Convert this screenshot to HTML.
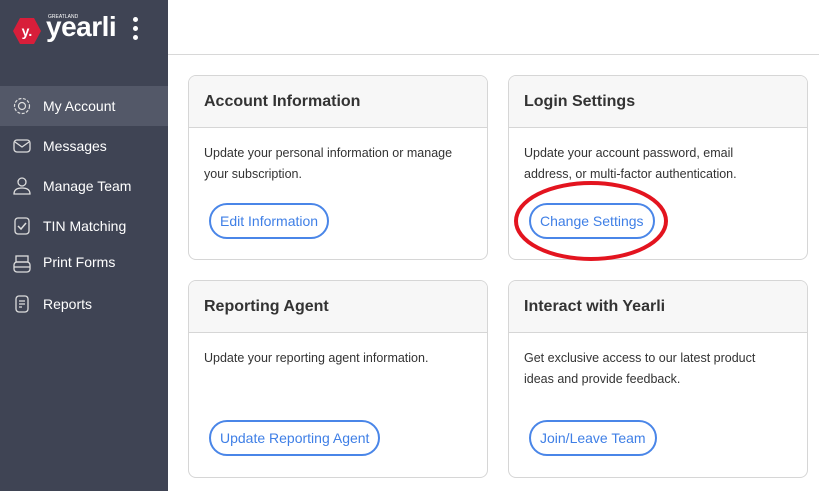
<!DOCTYPE html>
<html><head><style>
body{margin:0;width:819px;height:491px;overflow:hidden;font-family:"Liberation Sans",sans-serif;background:#fff;position:relative}
.side{position:absolute;left:0;top:0;width:168px;height:491px;background:#3f4454}
.top{position:absolute;left:168px;top:54px;width:651px;height:1px;background:#d8d8d8}
.item{position:absolute;left:0;width:168px;height:40px;color:#fff;font-size:14px;line-height:40px}
.item span{position:absolute;left:43px}
.item svg{position:absolute;left:12px;top:10px}
.card{position:absolute;width:298px;border:1px solid #d6d6d6;border-radius:8px;overflow:hidden;background:#fff}
.card h3{margin:0;height:51px;line-height:51px;background:#f7f7f7;border-bottom:1px solid #d6d6d6;font-size:16px;color:#333;padding-left:15px}
.card p{margin:0;position:absolute;left:15px;top:67px;font-size:12.5px;line-height:21px;color:#333;width:262px}
.btn{position:absolute;left:20px;height:36px;border:2px solid #4a86e8;border-radius:18px;color:#3f7fe6;font-size:14px;padding:0 9px;box-sizing:border-box;line-height:32px}
</style></head><body>
<div class="side">
<svg style="position:absolute;left:12px;top:16px" width="30" height="30" viewBox="0 0 30 30"><polygon points="8,2 22,2 29,15 22,28 8,28 1,15" fill="#d81e3a"/><text x="15" y="20" text-anchor="middle" fill="#fff" font-size="14" font-weight="bold" font-family="Liberation Sans">y.</text></svg>
<div style="position:absolute;left:48px;top:14px;color:#fff;font-size:5px">GREATLAND</div>
<div style="position:absolute;left:46px;top:13px;color:#fff;font-size:28px;font-weight:bold;letter-spacing:-0.5px;line-height:28px">yearli</div>
<div style="position:absolute;left:133px;top:17px;width:5px;height:5px;border-radius:3px;background:#fff;box-shadow:0 9px 0 #fff,0 18px 0 #fff"></div>
<div class="item" style="top:86px;background:#535868"><svg width="20" height="20" viewBox="0 0 20 20"><circle cx="10" cy="10" r="3.5" fill="none" stroke="#ddd" stroke-width="1.2"/><circle cx="10" cy="10" r="7.5" fill="none" stroke="#ddd" stroke-width="1.2" stroke-dasharray="3 1.5"/></svg><span>My Account</span></div>
<div class="item" style="top:126px"><svg width="20" height="20" viewBox="0 0 20 20"><rect x="2" y="4" width="16" height="12" rx="3" fill="none" stroke="#ddd" stroke-width="1.3"/><path d="M3 6l7 5 7-5" fill="none" stroke="#ddd" stroke-width="1.3"/></svg><span>Messages</span></div>
<div class="item" style="top:166px"><svg width="20" height="20" viewBox="0 0 20 20"><circle cx="10" cy="6" r="4" fill="none" stroke="#ddd" stroke-width="1.3"/><path d="M2 18q0-6 8-6t8 6z" fill="none" stroke="#ddd" stroke-width="1.3"/></svg><span>Manage Team</span></div>
<div class="item" style="top:206px"><svg width="20" height="20" viewBox="0 0 20 20"><rect x="3" y="2" width="14" height="16" rx="3" fill="none" stroke="#ddd" stroke-width="1.3"/><path d="M6 10l3 3 5-6" fill="none" stroke="#ddd" stroke-width="1.5"/></svg><span>TIN Matching</span></div>
<div class="item" style="top:242px"><svg width="20" height="24" viewBox="0 0 20 24"><rect x="4" y="4" width="12" height="6" fill="none" stroke="#ddd" stroke-width="1.3"/><rect x="2" y="10" width="16" height="10" rx="3" fill="none" stroke="#ddd" stroke-width="1.3"/><path d="M2 15h16" stroke="#ddd" stroke-width="1.3"/></svg><span>Print Forms</span></div>
<div class="item" style="top:284px"><svg width="20" height="20" viewBox="0 0 20 20"><rect x="4" y="2" width="12" height="16" rx="3" fill="none" stroke="#ddd" stroke-width="1.3"/><path d="M7 7h6M7 10h6M7 13h3" stroke="#ddd" stroke-width="1.3"/></svg><span>Reports</span></div>
</div>
<div class="top"></div>
<div class="card" style="left:188px;top:75px;height:183px"><h3>Account Information</h3><p>Update your personal information or manage your subscription.</p><div class="btn" style="top:127px">Edit Information</div></div>
<div class="card" style="left:508px;top:75px;height:183px"><h3>Login Settings</h3><p style="width:225px">Update your account password, email address, or multi-factor authentication.</p><div class="btn" style="top:127px">Change Settings</div></div>
<div class="card" style="left:188px;top:280px;height:196px"><h3>Reporting Agent</h3><p style="top:67px">Update your reporting agent information.</p><div class="btn" style="top:139px">Update Reporting Agent</div></div>
<div class="card" style="left:508px;top:280px;height:196px"><h3>Interact with Yearli</h3><p style="top:67px;width:245px">Get exclusive access to our latest product ideas and provide feedback.</p><div class="btn" style="top:139px">Join/Leave Team</div></div>
<svg style="position:absolute;left:0;top:0" width="819" height="491"><ellipse cx="591" cy="221" rx="75" ry="38" fill="none" stroke="#e3141f" stroke-width="4"/></svg>
</body></html>
